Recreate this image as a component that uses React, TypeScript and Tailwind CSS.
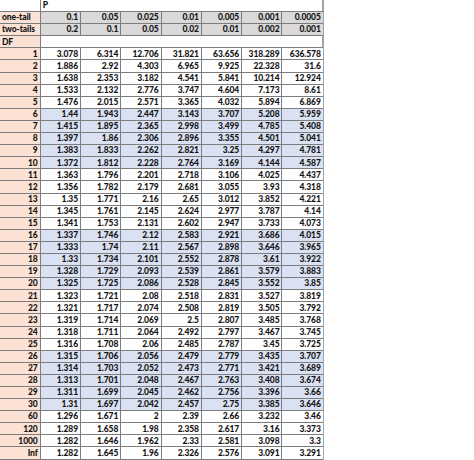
import React from "react";

const oneTail = ["0.1", "0.05", "0.025", "0.01", "0.005", "0.001", "0.0005"];
const twoTails = ["0.2", "0.1", "0.05", "0.02", "0.01", "0.002", "0.001"];

const data: [string, string][] = [
  ["1", "3.078 6.314 12.706 31.821 63.656 318.289 636.578"],
  ["2", "1.886 2.92 4.303 6.965 9.925 22.328 31.6"],
  ["3", "1.638 2.353 3.182 4.541 5.841 10.214 12.924"],
  ["4", "1.533 2.132 2.776 3.747 4.604 7.173 8.61"],
  ["5", "1.476 2.015 2.571 3.365 4.032 5.894 6.869"],
  ["6", "1.44 1.943 2.447 3.143 3.707 5.208 5.959"],
  ["7", "1.415 1.895 2.365 2.998 3.499 4.785 5.408"],
  ["8", "1.397 1.86 2.306 2.896 3.355 4.501 5.041"],
  ["9", "1.383 1.833 2.262 2.821 3.25 4.297 4.781"],
  ["10", "1.372 1.812 2.228 2.764 3.169 4.144 4.587"],
  ["11", "1.363 1.796 2.201 2.718 3.106 4.025 4.437"],
  ["12", "1.356 1.782 2.179 2.681 3.055 3.93 4.318"],
  ["13", "1.35 1.771 2.16 2.65 3.012 3.852 4.221"],
  ["14", "1.345 1.761 2.145 2.624 2.977 3.787 4.14"],
  ["15", "1.341 1.753 2.131 2.602 2.947 3.733 4.073"],
  ["16", "1.337 1.746 2.12 2.583 2.921 3.686 4.015"],
  ["17", "1.333 1.74 2.11 2.567 2.898 3.646 3.965"],
  ["18", "1.33 1.734 2.101 2.552 2.878 3.61 3.922"],
  ["19", "1.328 1.729 2.093 2.539 2.861 3.579 3.883"],
  ["20", "1.325 1.725 2.086 2.528 2.845 3.552 3.85"],
  ["21", "1.323 1.721 2.08 2.518 2.831 3.527 3.819"],
  ["22", "1.321 1.717 2.074 2.508 2.819 3.505 3.792"],
  ["23", "1.319 1.714 2.069 2.5 2.807 3.485 3.768"],
  ["24", "1.318 1.711 2.064 2.492 2.797 3.467 3.745"],
  ["25", "1.316 1.708 2.06 2.485 2.787 3.45 3.725"],
  ["26", "1.315 1.706 2.056 2.479 2.779 3.435 3.707"],
  ["27", "1.314 1.703 2.052 2.473 2.771 3.421 3.689"],
  ["28", "1.313 1.701 2.048 2.467 2.763 3.408 3.674"],
  ["29", "1.311 1.699 2.045 2.462 2.756 3.396 3.66"],
  ["30", "1.31 1.697 2.042 2.457 2.75 3.385 3.646"],
  ["60", "1.296 1.671 2 2.39 2.66 3.232 3.46"],
  ["120", "1.289 1.658 1.98 2.358 2.617 3.16 3.373"],
  ["1000", "1.282 1.646 1.962 2.33 2.581 3.098 3.3"],
  ["Inf", "1.282 1.645 1.96 2.326 2.576 3.091 3.291"],
];

// rows 6-10, 16-20, 26-30 are shaded blue
function isBlue(df: string) {
  const n = Number(df);
  return (n >= 6 && n <= 10) || (n >= 16 && n <= 20) || (n >= 26 && n <= 30);
}

const rowCls = "grid grid-cols-[40.7px_repeat(7,40.3px)] h-[12.1px]";
const cellCls = "flex items-center justify-end pr-[2px] border-b border-r border-[#7d7d7d] last:border-r-0";

export default function App() {
  return (
    <div className="h-[460px] w-[474px] overflow-hidden bg-white font-['Lato',sans-serif] text-[8.5px] font-black leading-none tracking-[-0.1px] text-[#151515]">
      <div className="w-[324px] border-r-2 border-[#a3a3a3]">
        {/* P row */}
        <div className={rowCls}>
          <div className="border-r border-b border-[#7d7d7d]" />
          <div className="col-span-7 flex items-center border-b border-[#7d7d7d] pl-[2px]">P</div>
        </div>

        {/* one-tail */}
        <div className={rowCls}>
          <div className="flex items-center border-r border-b border-[#7d7d7d] bg-[#fbe2d5] pl-[2px]">one-tail</div>
          {oneTail.map((v, i) => (
            <div key={i} className={`${cellCls} bg-[#d9d9d9]`}>{v}</div>
          ))}
        </div>

        {/* two-tails */}
        <div className={rowCls}>
          <div className="flex items-center border-r border-b border-[#7d7d7d] bg-[#fbe2d5] pl-[2px]">two-tails</div>
          {twoTails.map((v, i) => (
            <div key={i} className={`${cellCls} bg-[#d9d9d9]`}>{v}</div>
          ))}
        </div>

        {/* DF label row */}
        <div className={rowCls}>
          <div className="flex items-center border-r border-b border-[#7d7d7d] bg-[#fbe2d5] pl-[2px]">DF</div>
          <div className="col-span-7 border-b border-[#7d7d7d]" />
        </div>

        {data.map(([df, vals]) => (
          <div key={df} className={rowCls}>
            <div className="flex items-center justify-end border-r border-b border-[#7d7d7d] bg-[#fbe2d5] pr-[2px]">{df}</div>
            {vals.split(" ").map((v, i) => (
              <div key={i} className={`${cellCls} ${isBlue(df) ? "bg-[#d9e1f2]" : "bg-white"}`}>{v}</div>
            ))}
          </div>
        ))}
      </div>
    </div>
  );
}
